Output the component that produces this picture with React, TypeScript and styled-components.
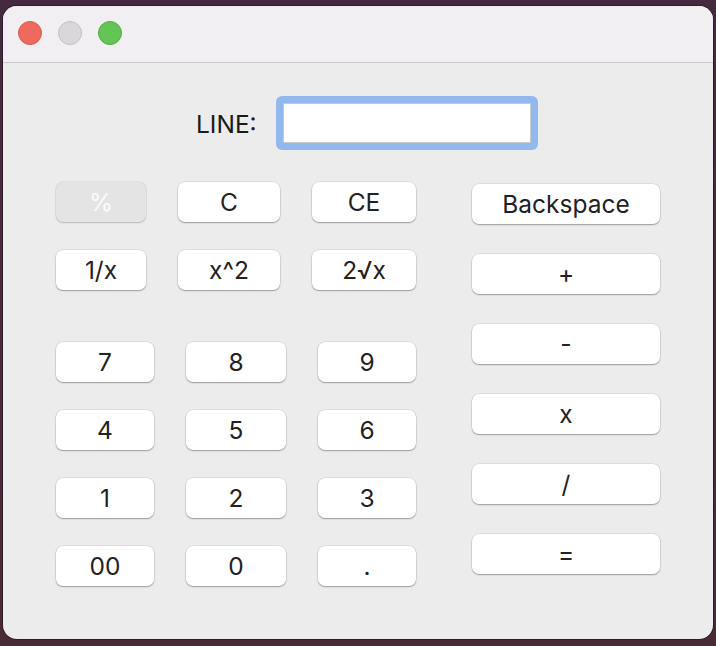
import React from 'react';
import styled, { createGlobalStyle } from 'styled-components';

const GlobalStyle = createGlobalStyle`
  html, body {
    margin: 0;
    padding: 0;
    width: 716px;
    height: 646px;
    overflow: hidden;
    background: #452a3e;
  }
  * { box-sizing: border-box; }
`;

const Desktop = styled.div`
  width: 716px;
  height: 646px;
  padding: 6px 3px 7px 3px;
  background: linear-gradient(180deg, #452a3f 0%, #482b37 100%);
`;

const Window = styled.div`
  width: 710px;
  height: 633px;
  border-radius: 14px;
  overflow: hidden;
  background: #ececec;
  display: flex;
  flex-direction: column;
  font-family: Inter, "Liberation Sans", sans-serif;
  box-shadow: 0 0 0 1px rgba(0, 0, 0, 0.35);
`;

const TitleBar = styled.div`
  height: 57px;
  flex-shrink: 0;
  background: #f1eff1;
  border-bottom: 1px solid #c9c7c9;
  display: flex;
  align-items: center;
  gap: 16px;
  padding: 0 0 3px 15px;
`;

const Light = styled.span<{ $fill: string; $edge: string }>`
  width: 24px;
  height: 24px;
  border-radius: 50%;
  background: ${(p) => p.$fill};
  border: 1px solid ${(p) => p.$edge};
`;

const Content = styled.div`
  flex: 1;
  padding: 33px 0 0 53px;
  display: flex;
  flex-direction: column;
`;

const LineRow = styled.div`
  display: flex;
  align-items: center;
  gap: 19px;
  padding-left: 140px;
  margin-bottom: 32px;
`;

const LineLabel = styled.label`
  font-size: 24.5px;
  color: #1a1a1a;
  padding-top: 1px;
`;

const FocusRing = styled.div`
  padding: 7px;
  background: #93b8ed;
  border-radius: 6px;
`;

const LineInput = styled.input`
  display: block;
  width: 248px;
  height: 40px;
  border: 1px solid #c8c8c8;
  background: #ffffff;
  outline: none;
  font-size: 22px;
  font-family: inherit;
  padding: 0 6px;
`;

const Body = styled.div`
  display: flex;
  align-items: flex-start;
`;

const LeftPane = styled.div`
  display: flex;
  flex-direction: column;
  gap: 52px;
  width: 360px;
`;

const KeyGrid = styled.div<{ $cols: string }>`
  display: grid;
  grid-template-columns: ${(p) => p.$cols};
  grid-auto-rows: 40px;
  column-gap: 32px;
  row-gap: 28px;
`;

const OpColumn = styled.div`
  margin: 2px 0 0 56px;
  width: 188px;
  display: flex;
  flex-direction: column;
  gap: 30px;
`;

const Key = styled.button<{ $disabled?: boolean }>`
  height: 40px;
  border: none;
  border-radius: 7px;
  font-family: inherit;
  font-size: 24.5px;
  padding: 0;
  color: ${(p) => (p.$disabled ? '#fbfbfb' : '#222222')};
  background: ${(p) => (p.$disabled ? '#e4e4e4' : '#ffffff')};
  box-shadow: ${(p) =>
    p.$disabled
      ? '0 0 0 0.5px rgba(0,0,0,0.10), 0 1px 1.5px rgba(0,0,0,0.18)'
      : '0 0 0 0.5px rgba(0,0,0,0.12), 0 1px 1.5px rgba(0,0,0,0.30)'};
  display: flex;
  align-items: center;
  justify-content: center;
  cursor: default;
`;

const fnKeys = ['%', 'C', 'CE', '1/x', 'x^2', '2√x'];
const numKeys = ['7', '8', '9', '4', '5', '6', '1', '2', '3', '00', '0', '.'];
const opKeys = ['Backspace', '+', '-', 'x', '/', '='];

export default function App() {
  return (
    <>
      <GlobalStyle />
      <Desktop>
        <Window>
          <TitleBar>
            <Light $fill="#ee6a5f" $edge="#d6594d" />
            <Light $fill="#d9d7d9" $edge="#c2c0c2" />
            <Light $fill="#62c554" $edge="#51aa42" />
          </TitleBar>
          <Content>
            <LineRow>
              <LineLabel>LINE:</LineLabel>
              <FocusRing>
                <LineInput />
              </FocusRing>
            </LineRow>
            <Body>
              <LeftPane>
                <KeyGrid $cols="90px 102px 104px">
                  {fnKeys.map((k) => (
                    <Key key={k} $disabled={k === '%'}>
                      {k}
                    </Key>
                  ))}
                </KeyGrid>
                <KeyGrid $cols="98px 100px 98px">
                  {numKeys.map((k) => (
                    <Key key={k}>{k}</Key>
                  ))}
                </KeyGrid>
              </LeftPane>
              <OpColumn>
                {opKeys.map((k) => (
                  <Key key={k}>{k}</Key>
                ))}
              </OpColumn>
            </Body>
          </Content>
        </Window>
      </Desktop>
    </>
  );
}
